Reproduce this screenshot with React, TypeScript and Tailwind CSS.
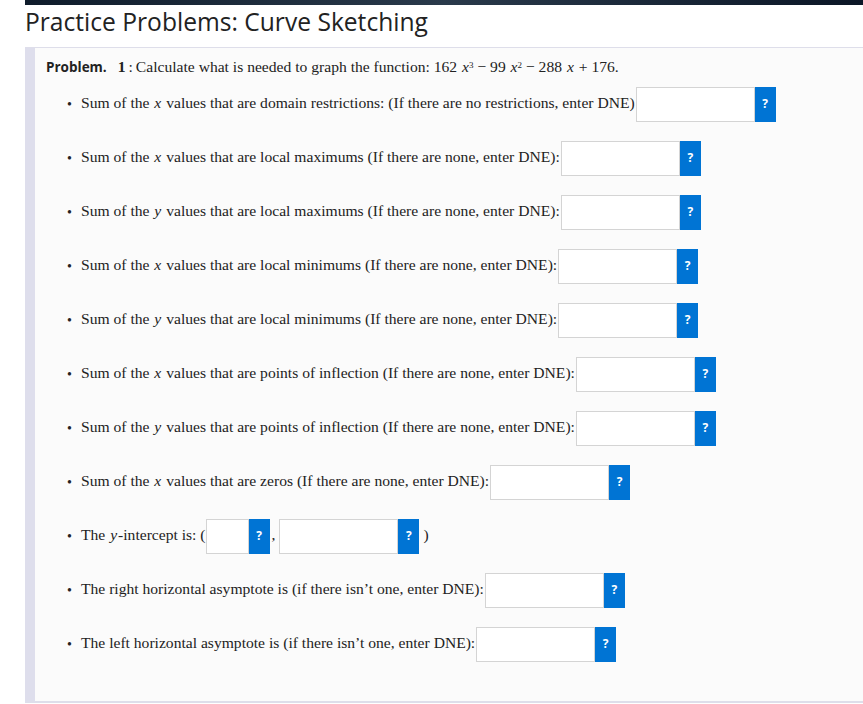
import React from "react";

const serif = { fontFamily: '"Liberation Serif", "DejaVu Serif", serif' };

const Var = ({ v }: { v: string }) => <i className="mx-[1px]">{v}</i>;

const Answer = ({ w = "w-[119px]" }: { w?: string }) => (
  <span className="inline-flex align-middle">
    <span className={`${w} h-[35px] border border-[#d4d4d4] bg-white`} />
    <span className="w-[21px] h-[35px] bg-[#0074d4] text-white flex items-center justify-center text-[12px] font-bold font-['Open_Sans',sans-serif]">
      ?
    </span>
  </span>
);

const Row = ({ children }: { children: React.ReactNode }) => (
  <li className="flex items-center h-[54px]">
    <span className="w-[14px] text-[#222] text-[14px]">•</span>
    <span className="text-[15.6px] text-[#222] whitespace-nowrap">{children}</span>
  </li>
);

const rows: { v: string; post: string }[] = [
  { v: "x", post: "values that are domain restrictions: (If there are no restrictions, enter DNE)" },
  { v: "x", post: "values that are local maximums (If there are none, enter DNE):" },
  { v: "y", post: "values that are local maximums (If there are none, enter DNE):" },
  { v: "x", post: "values that are local minimums (If there are none, enter DNE):" },
  { v: "y", post: "values that are local minimums (If there are none, enter DNE):" },
  { v: "x", post: "values that are points of inflection (If there are none, enter DNE):" },
  { v: "y", post: "values that are points of inflection (If there are none, enter DNE):" },
  { v: "x", post: "values that are zeros (If there are none, enter DNE):" },
];

export default function App() {
  return (
    <div className="w-[863px] h-[704px] bg-white overflow-hidden">
      {/* top bar */}
      <div className="ml-[25px] h-[5px] bg-gradient-to-r from-[#0f1c2b] via-[#2a3a4b] to-[#0b1626]" />
      <h1 className="ml-[25px] mt-[0px] text-[24.6px] leading-[34px] font-medium text-[#222] font-['Open_Sans',sans-serif]">
        Practice Problems: Curve Sketching
      </h1>
      {/* problem panel */}
      <div className="ml-[25px] mt-[8px] h-[656px] bg-[#fbfbfb] border-t border-b-2 border-[#dedeea] border-l-[10px] border-l-[#dedeec]" style={serif}>
        <div className="pl-[11px] pt-[12px] flex items-center text-[15.6px] text-[#222] h-[24px] mt-[1px] whitespace-pre">
          <span className="font-bold text-[13.5px] font-['Open_Sans',sans-serif] mr-[11px]">Problem.</span>
          <b>1</b>
          <span className="mx-[3px]">:</span>
          <span>
            Calculate what is needed to graph the function: 162 <Var v="x" />
            <sup className="text-[9px] -ml-[1px]">3</sup> − 99 <Var v="x" />
            <sup className="text-[9px] -ml-[1px]">2</sup> − 288 <Var v="x" /> + 176.
          </span>
        </div>
        <ul className="pl-[32px] mt-[4px]">
          {rows.map((r, i) => (
            <Row key={i}>
              Sum of the <Var v={r.v} /> {r.post}
              <span className="ml-[1px]">
                <Answer />
              </span>
            </Row>
          ))}
          <Row>
            The <Var v="y" />-intercept is: (
            <Answer w="w-[43px]" />
            <span className="ml-[2px] mr-[4px]">,</span>
            <Answer />
            <span className="ml-[4px]">)</span>
          </Row>
          <Row>
            The right horizontal asymptote is (if there isn’t one, enter DNE):
            <span className="ml-[1px]">
              <Answer />
            </span>
          </Row>
          <Row>
            The left horizontal asymptote is (if there isn’t one, enter DNE):
            <span className="ml-[1px]">
              <Answer />
            </span>
          </Row>
        </ul>
      </div>
    </div>
  );
}
